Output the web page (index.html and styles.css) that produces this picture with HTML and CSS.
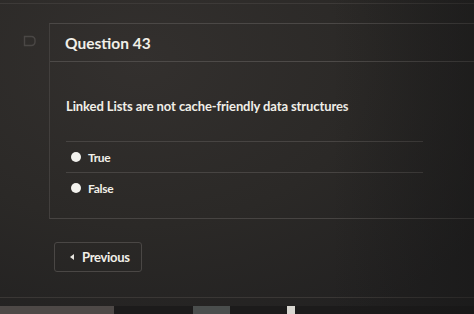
FILE: index.html
```html
<!DOCTYPE html>
<html lang="en">
<head>
<meta charset="utf-8">
<title>Question 43</title>
<link rel="stylesheet" href="styles.css">
</head>
<body>
<div class="screen">
  <div class="topline"></div>
  <div class="main">
    <div class="gutter">
      <svg class="flag" width="14" height="12" viewBox="0 0 14 12" aria-hidden="true">
        <path d="M1.5 1.5 H8.5 A3.5 3.5 0 0 1 12 5 V7 A3.5 3.5 0 0 1 8.5 10.5 H1.5 Z" fill="none" stroke="#4a4745" stroke-width="1.4"/>
      </svg>
    </div>
    <div class="content">
      <section class="card">
        <header class="card-head">Question 43</header>
        <div class="card-body">
          <p class="question">Linked Lists are not cache-friendly data structures</p>
          <ul class="answers">
            <li class="answer"><span class="radio"></span><span class="label">True</span></li>
            <li class="answer"><span class="radio"></span><span class="label">False</span></li>
          </ul>
        </div>
      </section>
      <div class="nav">
        <button class="btn-prev" type="button"><span class="tri"></span>Previous</button>
      </div>
    </div>
  </div>
  <div class="bottomline"></div>
  <div class="taskbar">
    <span class="tb tb-a"></span>
    <span class="tb tb-b"></span>
    <span class="tb tb-c"></span>
  </div>
  <div class="vignette"></div>
</div>
</body>
</html>
```
FILE: styles.css
```css
html, body {
  margin: 0;
  padding: 0;
}
body {
  width: 474px;
  height: 314px;
  overflow: hidden;
  font-family: Lato, "Open Sans", "DejaVu Sans", sans-serif;
  color: #f1efe8;
  background: #282625;
}
.screen {
  position: relative;
  width: 474px;
  height: 314px;
  overflow: hidden;
  background:
    radial-gradient(ellipse 420px 300px at 140px 60px, #33302e 0%, #2b2927 55%, #222121 100%);
}
.topline {
  height: 1px;
  margin-top: 3px;
  background: #3d3a38;
}
.main {
  display: flex;
  padding-top: 19px;
}
.gutter {
  width: 49px;
  flex: none;
  display: flex;
  justify-content: flex-start;
  padding-left: 23px;
  padding-top: 12px;
  box-sizing: border-box;
}
.flag {
  display: block;
}
.content {
  flex: 1;
  min-width: 0;
}
.card {
  border-top: 1px solid #4b4846;
  border-left: 1px solid #423f3d;
  border-bottom: 1px solid #474442;
  margin-right: -20px;
}
.card-head {
  height: 37px;
  display: flex;
  align-items: center;
  padding-left: 15px;
  font-size: 15.5px;
  font-weight: 700;
  letter-spacing: 0;
  border-bottom: 1px solid #4d4a48;
}
.card-body {
  padding: 36px 0 15px 16px;
}
.question {
  margin: 0;
  font-size: 13px;
  line-height: 16px;
  font-weight: 700;
  letter-spacing: -0.1px;
}
.answers {
  list-style: none;
  margin: 27px 0 0 0;
  padding: 0;
  width: 357px;
}
.answer {
  height: 30px;
  display: flex;
  align-items: center;
  border-top: 1px solid #474442;
  padding-left: 5px;
}
.radio {
  width: 10px;
  height: 10px;
  border-radius: 50%;
  background: #f3f2ee;
  margin-right: 7px;
  flex: none;
}
.label {
  font-size: 12px;
  font-weight: 700;
  letter-spacing: -0.3px;
}
.nav {
  padding: 23px 0 0 5px;
}
.btn-prev {
  display: flex;
  align-items: center;
  width: 88px;
  height: 30px;
  box-sizing: border-box;
  padding: 0 0 0 15px;
  background: transparent;
  border: 1px solid #4a4745;
  border-radius: 3px;
  color: #f1efe8;
  font-family: Lato, "Open Sans", "DejaVu Sans", sans-serif;
  font-size: 13px;
  font-weight: 700;
  letter-spacing: -0.3px;
}
.tri {
  width: 0;
  height: 0;
  border-top: 3px solid transparent;
  border-bottom: 3px solid transparent;
  border-right: 4px solid #e8e6e0;
  margin-right: 8px;
}
.bottomline {
  height: 1px;
  margin-top: 25px;
  background: #3a3735;
}
.taskbar {
  display: flex;
  margin-top: 8px;
  height: 8px;
  background: #1c1b1b;
}
.tb {
  display: block;
  height: 8px;
}
.tb-a {
  width: 114px;
  background: #4e4947;
}
.tb-b {
  width: 37px;
  margin-left: 79px;
  background: #4a4e4d;
}
.tb-c {
  width: 8px;
  margin-left: 57px;
  background: #d8d6d0;
}
.vignette {
  position: absolute;
  inset: 0;
  pointer-events: none;
  background: linear-gradient(90deg, rgba(0,0,0,0) 0%, rgba(0,0,0,0) 70%, rgba(20,20,20,0.45) 100%);
}
```
